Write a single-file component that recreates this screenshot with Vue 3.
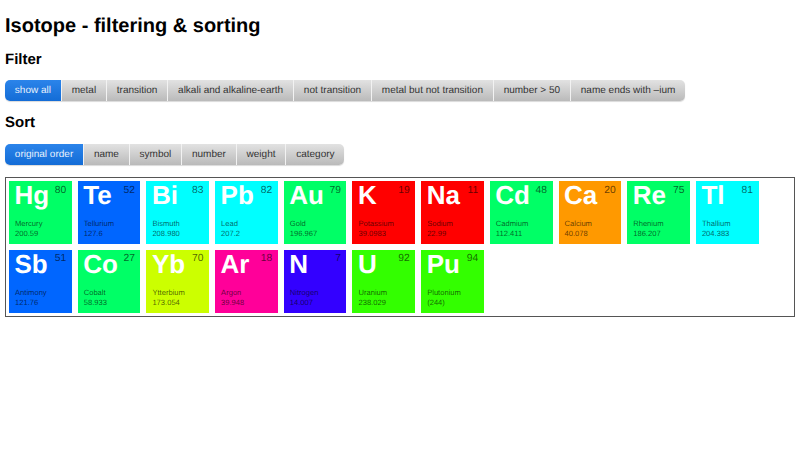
<script setup>
const filters = ["show all", "metal", "transition", "alkali and alkaline-earth", "not transition", "metal but not transition", "number > 50", "name ends with –ium"];
const sorts = ["original order", "name", "symbol", "number", "weight", "category"];

const elements = [
  { symbol: "Hg", number: 80, name: "Mercury", weight: "200.59", color: "#00ff66" },
  { symbol: "Te", number: 52, name: "Tellurium", weight: "127.6", color: "#0066ff" },
  { symbol: "Bi", number: 83, name: "Bismuth", weight: "208.980", color: "#00ffff" },
  { symbol: "Pb", number: 82, name: "Lead", weight: "207.2", color: "#00ffff" },
  { symbol: "Au", number: 79, name: "Gold", weight: "196.967", color: "#00ff66" },
  { symbol: "K", number: 19, name: "Potassium", weight: "39.0983", color: "#ff0000" },
  { symbol: "Na", number: 11, name: "Sodium", weight: "22.99", color: "#ff0000" },
  { symbol: "Cd", number: 48, name: "Cadmium", weight: "112.411", color: "#00ff66" },
  { symbol: "Ca", number: 20, name: "Calcium", weight: "40.078", color: "#ff9900" },
  { symbol: "Re", number: 75, name: "Rhenium", weight: "186.207", color: "#00ff66" },
  { symbol: "Tl", number: 81, name: "Thallium", weight: "204.383", color: "#00ffff" },
  { symbol: "Sb", number: 51, name: "Antimony", weight: "121.76", color: "#0066ff" },
  { symbol: "Co", number: 27, name: "Cobalt", weight: "58.933", color: "#00ff66" },
  { symbol: "Yb", number: 70, name: "Ytterbium", weight: "173.054", color: "#ccff00" },
  { symbol: "Ar", number: 18, name: "Argon", weight: "39.948", color: "#ff0099" },
  { symbol: "N", number: 7, name: "Nitrogen", weight: "14.007", color: "#3300ff" },
  { symbol: "U", number: 92, name: "Uranium", weight: "238.029", color: "#33ff00" },
  { symbol: "Pu", number: 94, name: "Plutonium", weight: "(244)", color: "#33ff00" },
];
</script>

<template>
  <div class="page">
    <h1>Isotope - filtering &amp; sorting</h1>

    <h2>Filter</h2>
    <ul class="button-bar">
      <li v-for="(f, i) in filters" :key="f" :class="{ active: i === 0 }">{{ f }}</li>
    </ul>

    <h2 class="sort-title">Sort</h2>
    <ul class="button-bar">
      <li v-for="(s, i) in sorts" :key="s" :class="{ active: i === 0 }">{{ s }}</li>
    </ul>

    <div class="container">
      <div v-for="el in elements" :key="el.symbol" class="element" :style="{ background: el.color }">
        <span class="number">{{ el.number }}</span>
        <span class="symbol">{{ el.symbol }}</span>
        <span class="name">{{ el.name }}</span>
        <span class="weight">{{ el.weight }}</span>
      </div>
    </div>
  </div>
</template>

<style>
body {
  background: #fff;
}
</style>

<style scoped>
.page {
  padding: 0 5px;
  font-family: "Liberation Sans", Arial, sans-serif;
  color: #000;
  text-rendering: geometricPrecision;
}

h1 {
  margin: 0;
  padding-top: 13px;
  font-size: 20px;
  line-height: 26px;
  font-weight: bold;
}

h2 {
  margin: 12px 0 11px;
  font-size: 15px;
  line-height: 18px;
  font-weight: bold;
}

.button-bar {
  display: flex;
  list-style: none;
  margin: 0 0 12px;
  padding: 0;
  width: fit-content;
  border-radius: 5px;
  overflow: hidden;
  box-shadow: 0 1px 1px rgba(0, 0, 0, 0.15);
}

.sort-title {
  margin: 13px 0 12px;
}

.button-bar li {
  padding: 0 9.85px;
  height: 21px;
  line-height: 21px;
  font-size: 10px;
  color: #333;
  background: linear-gradient(#e2e2e2, #bababa);
  border-left: 1px solid #f2f2f2;
}

.button-bar li:first-child {
  border-left: none;
}

.button-bar li.active {
  color: #e8f1fc;
  background: linear-gradient(#2b84ea, #136cd6);
}

.container {
  display: flex;
  flex-wrap: wrap;
  gap: 6px;
  padding: 3px;
  border: 1px solid #555;
}

.element {
  position: relative;
  display: flex;
  flex-direction: column;
  box-sizing: border-box;
  width: 62.7px;
  height: 62.75px;
  padding-left: 6px;
  color: rgba(0, 0, 0, 0.62);
}

.number {
  position: absolute;
  top: 2.5px;
  right: 5.5px;
  font-size: 10.3px;
  line-height: 13px;
}

.symbol {
  margin-left: -0.5px;
  font-size: 26px;
  line-height: 28px;
  font-weight: bold;
  color: #fff;
}

.name {
  margin-top: 10px;
  font-size: 7.6px;
  line-height: 10px;
}

.weight {
  font-size: 7.6px;
  line-height: 10px;
}
</style>
